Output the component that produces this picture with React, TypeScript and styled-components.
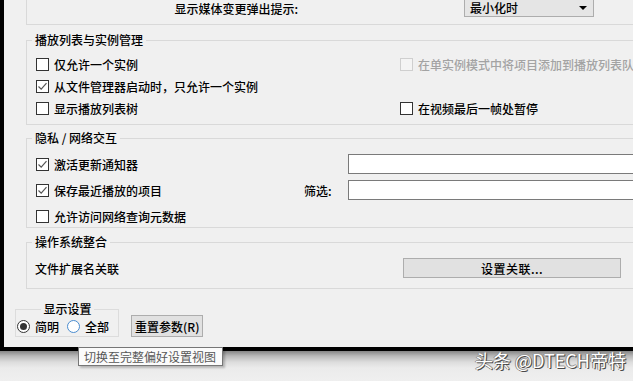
import React from 'react'
import styled, { createGlobalStyle } from 'styled-components'

const GlobalStyle = createGlobalStyle`
  html, body {
    margin: 0;
    padding: 0;
  }
  body {
    width: 633px;
    height: 381px;
    overflow: hidden;
    background: #ededed;
    font-family: "Noto Sans CJK SC", "Microsoft YaHei", sans-serif;
    font-size: 12px;
    font-weight: 500;
    color: #000;
  }
`

const Page = styled.div`
  position: relative;
  width: 633px;
  height: 381px;
  overflow: hidden;
`

const Window = styled.div`
  height: 347px;
  border-left: 4px solid #000;
  border-bottom: 4px solid #000;
  background: #f0f0f0;
  overflow: hidden;
  display: flex;
  flex-direction: column;
`

const Shade = styled.div`
  height: 30px;
  background: linear-gradient(#858585 0, #b8b8b8 5px, #dcdcdc 11px, #ebebeb 17px, #efefef 30px);
`

const TopGroup = styled.div`
  margin: 0 -20px 0 22px;
  height: 24px;
  border-left: 1px solid #d9d9d9;
  border-bottom: 1px solid #d9d9d9;
  display: flex;
  align-items: flex-start;
  flex: none;
`

const TopLabel = styled.span`
  width: 271px;
  text-align: right;
  line-height: 18px;
  white-space: nowrap;
`

const Combo = styled.div`
  margin: -1px 0 0 166px;
  width: 130px;
  height: 18px;
  box-sizing: border-box;
  border: 1px solid #adadad;
  background: #e5e5e5;
  display: flex;
  align-items: center;
  justify-content: space-between;
  padding: 0 6px 0 5px;
  line-height: 16px;
`

const Arrow = styled.span`
  width: 0;
  height: 0;
  border-left: 4px solid transparent;
  border-right: 4px solid transparent;
  border-top: 4px solid #000;
`

const Group = styled.fieldset<{ $top: number }>`
  margin: ${p => p.$top}px -20px 0 22px;
  padding: 0;
  border: 1px solid #d9d9d9;
  min-width: 0;
  flex: none;
`

const GroupTitle = styled.legend`
  margin-left: 5px;
  padding: 0 3px;
  line-height: 14px;
  font-size: 12px;
`

const PlaylistBody = styled.div`
  padding: 6px 0 5px 9px;
  display: grid;
  grid-template-columns: 364px 1fr;
  grid-auto-rows: 22px;
`

const PrivacyBody = styled.div`
  padding: 8px 0 0 9px;
  display: grid;
  grid-template-columns: 269px 43px 1fr;
  grid-auto-rows: 22px;
  row-gap: 4px;
`

const SystemBody = styled.div`
  padding: 8px 0 9px 8px;
  display: grid;
  grid-template-columns: 368px 218px;
  grid-auto-rows: 22px;
  align-items: center;
`

const CheckItem = styled.label<{ $disabled?: boolean }>`
  display: flex;
  align-items: center;
  gap: 5px;
  white-space: nowrap;
  min-width: 0;
  color: ${p => (p.$disabled ? '#a3a3a3' : '#000')};
`

const Box = styled.span<{ $disabled?: boolean }>`
  width: 13px;
  height: 13px;
  box-sizing: border-box;
  flex: none;
  border: 1px solid ${p => (p.$disabled ? '#cfcfcf' : '#333')};
  background: ${p => (p.$disabled ? '#f4f4f4' : '#fff')};
  display: flex;
  align-items: center;
  justify-content: center;
`

const FieldLabel = styled.span`
  align-self: center;
  white-space: nowrap;
  margin-left: -1px;
`

const TextBox = styled.div`
  grid-column: 3;
  align-self: center;
  height: 20px;
  box-sizing: border-box;
  border: 1px solid #7a7a7a;
  background: #fff;
`

const Button = styled.div<{ $h: number }>`
  height: ${p => p.$h}px;
  box-sizing: border-box;
  border: 1px solid #adadad;
  background: #e1e1e1;
  display: flex;
  align-items: center;
  justify-content: center;
  white-space: nowrap;
  letter-spacing: ${p => (p.$h > 21 ? '0' : '0.5px')};
`

const BottomRow = styled.div`
  margin-top: 13px;
  padding-left: 11px;
  display: flex;
  align-items: flex-end;
  flex: none;
`

const ViewBox = styled.fieldset`
  margin: 0;
  padding: 0 0 0 1px;
  width: 104px;
  box-sizing: border-box;
  border: 1px solid #dcdcdc;
  min-width: 0;
`

const ViewTitle = styled.legend`
  margin: 0 auto;
  padding: 0 2px;
  line-height: 14px;
  font-size: 12px;
`

const RadioRow = styled.div`
  height: 20px;
  display: flex;
  align-items: center;
`

const RadioItem = styled.label<{ $first?: boolean }>`
  display: flex;
  align-items: center;
  gap: 5px;
  margin-left: ${p => (p.$first ? '0' : '8px')};
  white-space: nowrap;
`

const Radio = styled.span<{ $checked?: boolean; $hover?: boolean }>`
  width: 13px;
  height: 13px;
  box-sizing: border-box;
  border-radius: 50%;
  border: 1px solid ${p => (p.$hover ? '#4a8ccf' : '#333')};
  background: #fff;
  display: flex;
  align-items: center;
  justify-content: center;
  &::after {
    content: '';
    width: 7px;
    height: 7px;
    border-radius: 50%;
    background: #333;
    display: ${p => (p.$checked ? 'block' : 'none')};
  }
`

const ResetButton = styled(Button)`
  width: 72px;
  margin-left: 12px;
  justify-content: flex-start;
  padding-left: 3px;
`

const Tooltip = styled.div`
  position: absolute;
  left: 78px;
  top: 347px;
  height: 19px;
  box-sizing: border-box;
  padding: 0 6px 0 5px;
  border: 1px solid #767676;
  background: #fbfbfb;
  color: #575757;
  font-weight: 400;
  line-height: 17px;
  white-space: nowrap;
  box-shadow: 2px 2px 2px rgba(0, 0, 0, 0.22);
`

const Watermark = styled.div`
  position: absolute;
  left: 475px;
  top: 349px;
  font-size: 18px;
  font-weight: 400;
  line-height: 22px;
  color: #fff;
  white-space: nowrap;
  text-shadow: 1px 1px 0 #4a4a4a, -1px 0 0 #8a8a8a, 0 -1px 0 #9a9a9a, 1px 0 1px #666;
`

const Check: React.FC<{ checked?: boolean; disabled?: boolean; children: React.ReactNode }> = ({ checked, disabled, children }) => (
  <CheckItem $disabled={disabled}>
    <Box $disabled={disabled}>
      {checked && (
        <svg width="11" height="11" viewBox="0 0 11 11">
          <path d="M1.5 5.5 L4.2 8.2 L9.5 2.2" fill="none" stroke="#555" strokeWidth="1.2" />
        </svg>
      )}
    </Box>
    {children}
  </CheckItem>
)

const App: React.FC = () => {
  return (
    <Page>
      <GlobalStyle />
      <Window>
        <TopGroup>
          <TopLabel>显示媒体变更弹出提示:</TopLabel>
          <Combo>
            <span>最小化时</span>
            <Arrow />
          </Combo>
        </TopGroup>

        <Group $top={8}>
          <GroupTitle>播放列表与实例管理</GroupTitle>
          <PlaylistBody>
            <Check>仅允许一个实例</Check>
            <Check disabled>在单实例模式中将项目添加到播放列表队</Check>
            <Check checked>从文件管理器启动时，只允许一个实例</Check>
            <span />
            <Check>显示播放列表树</Check>
            <Check>在视频最后一帧处暂停</Check>
          </PlaylistBody>
        </Group>

        <Group $top={6}>
          <GroupTitle>隐私 / 网络交互</GroupTitle>
          <PrivacyBody>
            <Check checked>激活更新通知器</Check>
            <TextBox />
            <Check checked>保存最近播放的项目</Check>
            <FieldLabel>筛选:</FieldLabel>
            <TextBox />
            <Check>允许访问网络查询元数据</Check>
          </PrivacyBody>
        </Group>

        <Group $top={7}>
          <GroupTitle>操作系统整合</GroupTitle>
          <SystemBody>
            <span>文件扩展名关联</span>
            <Button $h={20}>设置关联...</Button>
          </SystemBody>
        </Group>

        <BottomRow>
          <ViewBox>
            <ViewTitle>显示设置</ViewTitle>
            <RadioRow>
              <RadioItem $first>
                <Radio $checked />
                简明
              </RadioItem>
              <RadioItem>
                <Radio $hover />
                全部
              </RadioItem>
            </RadioRow>
          </ViewBox>
          <ResetButton $h={22}>重置参数(R)</ResetButton>
        </BottomRow>
      </Window>
      <Shade />
      <Tooltip>切换至完整偏好设置视图</Tooltip>
      <Watermark>头条 @DTECH帝特</Watermark>
    </Page>
  )
}

export default App
